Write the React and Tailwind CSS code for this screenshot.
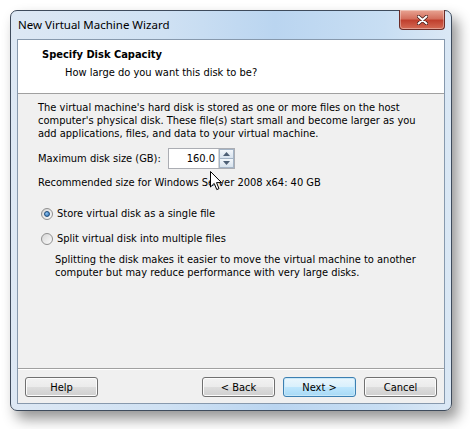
import React from 'react'

const ui = { fontFamily: '"DejaVu Sans Condensed", "Liberation Sans", sans-serif' }

function Radio({ checked }) {
  return (
    <span className="relative flex h-[12px] w-[12px] items-center justify-center rounded-full border border-[#8f8f8f] bg-[linear-gradient(135deg,#d6d6d6,#fbfbfb)]">
      {checked && (
        <span className="h-[6px] w-[6px] rounded-full border border-[#1c4a7a] bg-[radial-gradient(circle_at_35%_35%,#8fc3f0,#2a6fb6)]" />
      )}
    </span>
  )
}

function Button({ children, primary }) {
  return (
    <button
      className={
        primary
          ? 'h-[20px] w-[73px] rounded-[3px] border border-[#3c7fb1] bg-[linear-gradient(#eaf6fd_0%,#d9f0fc_50%,#bee6fd_51%,#a7d9f5_100%)] text-[11px] text-black shadow-[inset_0_0_0_1px_#c8e8f9]'
          : 'h-[20px] w-[73px] rounded-[3px] border border-[#707070] bg-[linear-gradient(#f2f2f2_0%,#ebebeb_50%,#dddddd_51%,#cfcfcf_100%)] text-[11px] text-black shadow-[inset_0_0_0_1px_#fcfcfc]'
      }
      style={ui}
    >
      {children}
    </button>
  )
}

function Cursor() {
  return (
    <svg className="absolute left-[210px] top-[171px]" width="13" height="20" viewBox="0 0 13 20">
      <path d="M0.5 0.5 L0.5 16 L4.2 12.4 L6.8 18.6 L9 17.6 L6.5 11.6 L11.5 11.6 Z" fill="#fff" stroke="#000" strokeWidth="1" strokeLinejoin="round" />
    </svg>
  )
}

export default function App() {
  return (
    <div className="relative h-[429px] w-[470px] bg-white pl-[10px] pt-[10px]" style={ui}>
      <div className="flex h-[401px] w-[442px] flex-col rounded-[7px] border border-[#3e4b5c] bg-[linear-gradient(to_right,#dde8f4_0%,#cfe1f3_35%,#bad5f0_60%,#c8def3_85%,#dbe8f5_100%)] px-[6px] pb-[6px] shadow-[6px_8px_14px_rgba(0,0,0,0.42)]">
        <div className="flex h-[28px] items-start justify-between">
          <span className="pl-[1px] pt-[7px] text-[11.5px] leading-[14px] text-black" style={{ fontFamily: '"Noto Sans", "Open Sans", sans-serif' }}>
            New Virtual Machine Wizard
          </span>
          <div className="-mt-[1px] flex h-[20px] w-[46px] items-center justify-center rounded-b-[4px] border border-t-0 border-[#6b2b26] bg-[linear-gradient(#e8a493_0%,#d4705e_45%,#c0402e_55%,#d56b55_100%)] shadow-[inset_0_0_0_1px_rgba(255,255,255,0.35)]">
            <svg width="11" height="10" viewBox="0 0 11 10">
              <path d="M1.5 1.5 L9.5 8.5 M9.5 1.5 L1.5 8.5" stroke="#3b1410" strokeWidth="3.4" strokeLinecap="round" />
              <path d="M1.5 1.5 L9.5 8.5 M9.5 1.5 L1.5 8.5" stroke="#fff" strokeWidth="2" strokeLinecap="round" />
            </svg>
          </div>
        </div>

        <div className="flex flex-1 flex-col border border-[#8799ad] bg-[#f0f0f0] text-[11px] leading-[13px] text-black">
          <div className="h-[54px] border-b border-[#a0a0a0] bg-white pl-[24px] pt-[8px]">
            <div className="font-bold">Specify Disk Capacity</div>
            <div className="mt-[5px] pl-[23px]">How large do you want this disk to be?</div>
          </div>

          <div className="flex flex-1 flex-col px-[20px] pt-[7px]">
            <p>
              The virtual machine's hard disk is stored as one or more files on the host
              <br />
              computer's physical disk. These file(s) start small and become larger as you
              <br />
              add applications, files, and data to your virtual machine.
            </p>

            <div className="mt-[8px] flex items-center">
              <span className="w-[130px]">Maximum disk size (GB):</span>
              <div className="flex h-[21px] w-[67px] border border-[#abadb3] bg-white">
                <span className="flex-1 pr-[3px] pt-[3px] text-right">160.0</span>
                <div className="flex w-[16px] flex-col border-l border-[#d6d6d6]">
                  <div className="flex flex-1 items-center justify-center border border-[#a4b4c6] bg-[linear-gradient(#f3f7fb,#d8e3ee)]">
                    <svg width="7" height="4" viewBox="0 0 7 4"><path d="M0 4 L3.5 0 L7 4 Z" fill="#4d5f75" /></svg>
                  </div>
                  <div className="flex flex-1 items-center justify-center border border-t-0 border-[#a4b4c6] bg-[linear-gradient(#f3f7fb,#d8e3ee)]">
                    <svg width="7" height="4" viewBox="0 0 7 4"><path d="M0 0 L3.5 4 L7 0 Z" fill="#4d5f75" /></svg>
                  </div>
                </div>
              </div>
            </div>

            <p className="mt-[7px]">Recommended size for Windows Server 2008 x64: 40 GB</p>

            <label className="mt-[18px] flex items-center gap-[4px] pl-[3px]">
              <Radio checked />
              <span>Store virtual disk as a single file</span>
            </label>
            <label className="mt-[12px] flex items-center gap-[4px] pl-[3px]">
              <Radio />
              <span>Split virtual disk into multiple files</span>
            </label>
            <p className="mt-[8px] pl-[17px]">
              Splitting the disk makes it easier to move the virtual machine to another
              <br />
              computer but may reduce performance with very large disks.
            </p>
          </div>

          <div className="border-t border-[#a0a0a0] shadow-[inset_0_1px_0_#ffffff]">
            <div className="flex items-center justify-between px-[7px] pb-[6px] pt-[8px]">
              <Button>Help</Button>
              <div className="flex gap-[8px]">
                <Button>&lt; Back</Button>
                <Button primary>Next &gt;</Button>
                <Button>Cancel</Button>
              </div>
            </div>
          </div>
        </div>
      </div>
      <Cursor />
    </div>
  )
}
